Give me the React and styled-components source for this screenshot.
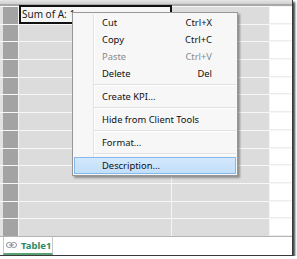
import React from 'react'
import styled, { createGlobalStyle } from 'styled-components'

const GlobalStyle = createGlobalStyle`
  html, body {
    margin: 0;
    padding: 0;
    background: #ffffff;
  }
  body {
    font-family: "Noto Sans", "Open Sans", sans-serif;
  }
`

const Frame = styled.div`
  position: relative;
  width: 292px;
  height: 255px;
  background: #ffffff;
  border-right: 1px solid #3a3a3a;
  border-bottom: 1px solid #3a3a3a;
  box-shadow: 2px 2px 2px rgba(0, 0, 0, 0.75);
  display: flex;
  flex-direction: column;
`

const HeaderStrip = styled.div`
  height: 4px;
  background: linear-gradient(#e6e6e6, #cfcfcf);
  border-bottom: 2px solid #a8a8a8;
  flex: none;
`

const Body = styled.div`
  flex: 1;
  display: grid;
  grid-template-rows: repeat(13, 1fr);
  border-bottom: 1px solid #b4b4b4;
`

const Row = styled.div`
  display: grid;
  grid-template-columns: 3px 16px 153px 98px 1fr;
  border-top: 1px solid #f7f7f7;
`

const Cell = styled.div`
  background: ${(p) =>
    p.kind === 'margin' ? '#e2e2e2' : p.kind === 'head' ? '#a3a3a3' : p.kind === 'empty' ? '#ffffff' : '#dcdcdc'};
  border-right: 1px solid ${(p) => (p.kind === 'empty' || p.kind === 'margin' ? 'transparent' : '#f4f4f4')};
  ${(p) => (p.kind === 'empty' ? 'border-bottom: 1px solid #ececec;' : '')}
`

const Selected = styled.div`
  margin-top: -2px;
  background: #f6f6f6;
  border: 2px solid #111;
  font-size: 10px;
  line-height: 14px;
  padding-left: 1px;
  color: #1a1a1a;
  white-space: nowrap;
  overflow: hidden;
`

const TabBar = styled.div`
  height: 18px;
  flex: none;
  display: flex;
  align-items: stretch;
  padding-left: 3px;
  background: #ffffff;
`

const Tab = styled.div`
  width: 50px;
  box-sizing: border-box;
  display: flex;
  align-items: center;
  gap: 4px;
  padding-left: 2px;
  border-left: 1px solid #c8c8c8;
  border-right: 1px solid #c8c8c8;
  border-bottom: 2px solid #58a274;
  font-size: 9.5px;
  font-weight: 700;
  color: #2b8a68;
`

const Menu = styled.div`
  position: absolute;
  left: 72px;
  top: 12px;
  width: 166px;
  box-sizing: border-box;
  padding: 1px;
  background: #f7f7f7;
  border: 1px solid #979797;
  box-shadow: 2px 2px 2px rgba(0, 0, 0, 0.35);
  font-size: 9.4px;
  color: #111;

  &::before {
    content: '';
    position: absolute;
    left: 20px;
    top: 1px;
    bottom: 1px;
    width: 1px;
    background: #e2e3e3;
    border-right: 1px solid #ffffff;
  }
`

const Item = styled.div`
  position: relative;
  height: 17px;
  box-sizing: border-box;
  display: flex;
  align-items: center;
  padding: 0 23px 0 27px;
  color: ${(p) => (p.disabled ? '#8a8a8a' : '#111')};
  background: ${(p) => (p.active ? 'linear-gradient(#d3e8fc, #c2dffa)' : 'transparent')};
  border: 1px solid ${(p) => (p.active ? '#84b9ec' : 'transparent')};
`

const Label = styled.span`
  flex: 1;
  white-space: nowrap;
`

const Shortcut = styled.span`
  white-space: nowrap;
`

const Separator = styled.div`
  position: relative;
  height: 6px;
  margin-left: 20px;
  display: flex;
  align-items: center;

  &::after {
    content: '';
    flex: 1;
    height: 1px;
    background: #e0e0e0;
    border-bottom: 1px solid #ffffff;
  }
`

const items = [
  { label: 'Cut', key: 'Ctrl+X' },
  { label: 'Copy', key: 'Ctrl+C' },
  { label: 'Paste', key: 'Ctrl+V', disabled: true },
  { label: 'Delete', key: 'Del' },
  { sep: true },
  { label: 'Create KPI...' },
  { sep: true },
  { label: 'Hide from Client Tools' },
  { sep: true },
  { label: 'Format...' },
  { sep: true },
  { label: 'Description...', active: true },
]

function LinkIcon() {
  return (
    <svg width="11" height="6" viewBox="0 0 11 6">
      <rect x="0.5" y="0.5" width="5.5" height="5" rx="2.5" fill="none" stroke="#8a8f99" strokeWidth="1" />
      <rect x="5" y="0.5" width="5.5" height="5" rx="2.5" fill="none" stroke="#8a8f99" strokeWidth="1" />
      <line x1="3" y1="3" x2="8" y2="3" stroke="#8a8f99" strokeWidth="1" />
    </svg>
  )
}

export default function App() {
  const rows = Array.from({ length: 13 }, (_, i) => i)
  return (
    <>
      <GlobalStyle />
      <Frame>
        <HeaderStrip />
        <Body>
          {rows.map((r) => (
            <Row key={r}>
              <Cell kind="margin" />
              <Cell kind="head" />
              {r === 0 ? <Selected>Sum of A: 1</Selected> : <Cell />}
              <Cell />
              <Cell kind="empty" />
            </Row>
          ))}
        </Body>
        <TabBar>
          <Tab>
            <LinkIcon />
            Table1
          </Tab>
        </TabBar>
        <Menu>
          {items.map((it, i) =>
            it.sep ? (
              <Separator key={i} />
            ) : (
              <Item key={i} disabled={it.disabled} active={it.active}>
                <Label>{it.label}</Label>
                {it.key && <Shortcut>{it.key}</Shortcut>}
              </Item>
            )
          )}
        </Menu>
      </Frame>
    </>
  )
}
